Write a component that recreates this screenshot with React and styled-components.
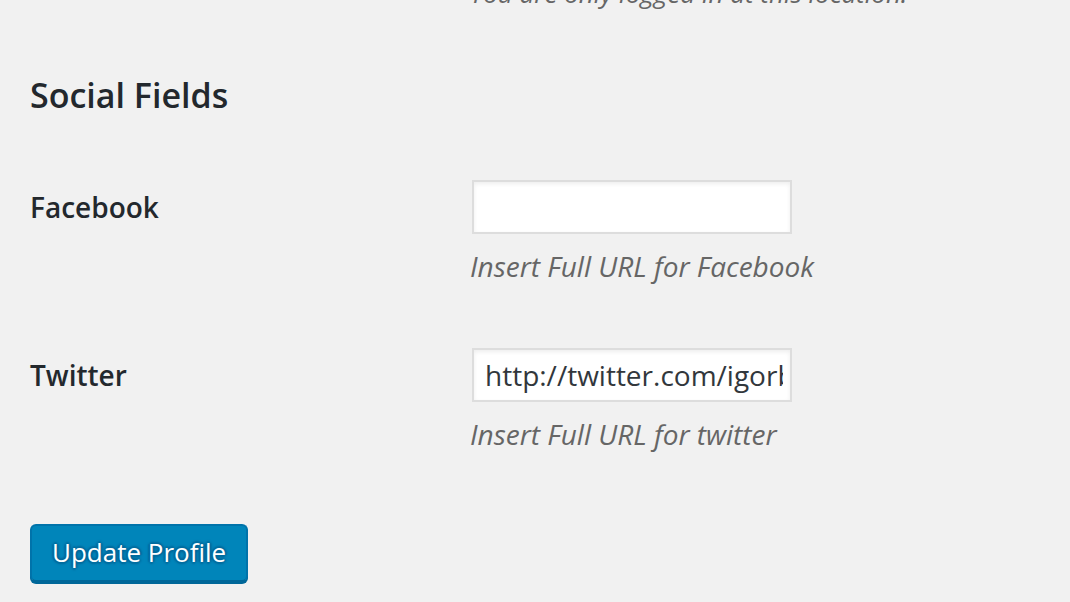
import React from "react";
import styled, { createGlobalStyle } from "styled-components";

const Global = createGlobalStyle`
  html, body { margin: 0; padding: 0; background: #f1f1f1; }
  body { font-family: "Open Sans", "Liberation Sans", sans-serif; color: #23282d; overflow: hidden; }
  * { box-sizing: border-box; }
`;

const Page = styled.div`
  width: 1070px;
  height: 602px;
  padding-left: 30px;
  overflow: hidden;
  display: flex;
  flex-direction: column;
`;

const Note = styled.p`
  margin: -22px 0 0 440px;
  font-size: 26px;
  line-height: 30px;
  font-style: italic;
  color: #666;
`;

const Heading = styled.h2`
  margin: 67px 0 0;
  font-size: 34px;
  line-height: 40px;
  font-weight: 600;
  color: #23282d;
`;

const Row = styled.div`
  display: grid;
  grid-template-columns: 440px 1fr;
  margin-top: ${(p) => p.$top}px;
`;

const Label = styled.label`
  padding-top: 9px;
  font-size: 28px;
  line-height: 36px;
  font-weight: 600;
  color: #23282d;
`;

const Field = styled.div`
  display: flex;
  flex-direction: column;
  align-items: flex-start;
`;

const Input = styled.input`
  width: 320px;
  height: 54px;
  margin: 0 0 0 2px;
  padding: 0 7px 0 11px;
  border: 2px solid #ddd;
  border-radius: 0;
  background: #fff;
  box-shadow: inset 0 2px 4px rgba(0, 0, 0, 0.07);
  font-family: "Open Sans", "Liberation Sans", sans-serif;
  font-size: 28px;
  color: #32373c;
  outline: none;
`;

const Description = styled.p`
  margin: 14px 0 0;
  font-size: 28px;
  line-height: 36px;
  font-style: italic;
  color: #666;
`;

const Button = styled.button`
  align-self: flex-start;
  margin-top: 72px;
  height: 58px;
  padding: 0 20px 2px;
  border: 2px solid #0073aa;
  border-bottom-color: #006799;
  border-radius: 6px;
  background: #0085ba;
  box-shadow: 0 2px 0 #006799;
  color: #fff;
  font-family: "Open Sans", "Liberation Sans", sans-serif;
  font-size: 26px;
  line-height: 1;
  text-shadow: 0 -2px 2px #006799, 2px 0 2px #006799, 0 2px 2px #006799, -2px 0 2px #006799;
  cursor: pointer;
`;

export default function App() {
  return (
    <>
      <Global />
      <Page>
        <Note>You are only logged in at this location.</Note>
        <Heading>Social Fields</Heading>
        <Row $top={65}>
          <Label htmlFor="facebook">Facebook</Label>
          <Field>
            <Input id="facebook" type="text" defaultValue="" />
            <Description>Insert Full URL for Facebook</Description>
          </Field>
        </Row>
        <Row $top={64}>
          <Label htmlFor="twitter">Twitter</Label>
          <Field>
            <Input id="twitter" type="text" defaultValue="http://twitter.com/igorbenic" />
            <Description>Insert Full URL for twitter</Description>
          </Field>
        </Row>
        <Button type="button">Update Profile</Button>
      </Page>
    </>
  );
}
